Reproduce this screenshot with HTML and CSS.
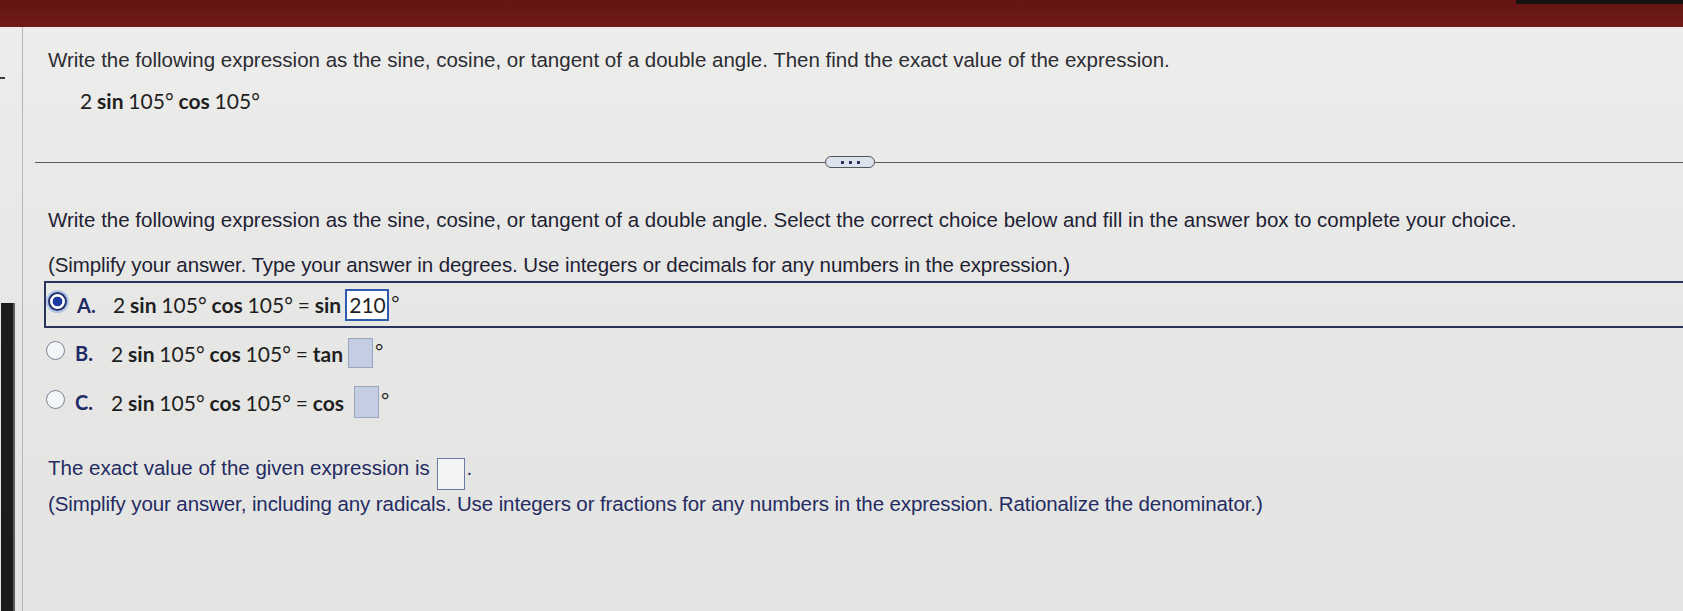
FILE: index.html
```html
<!DOCTYPE html>
<html>
<head>
<meta charset="utf-8">
<title>Double angle</title>
<link rel="stylesheet" href="styles.css">
</head>
<body>
<header class="topbar"><div class="topbar-dark"></div></header>
<div class="page">
  <aside class="gutter"><div class="tick"></div><div class="bezel"></div></aside>
  <main class="content">
    <p class="q-title">Write the following expression as the sine, cosine, or tangent of a double angle. Then find the exact value of the expression.</p>
    <p class="math q-expr">2 <b>sin</b> 105° <b>cos</b> 105°</p>
    <div class="divider"><span class="rule first"></span><span class="more"><i></i><i></i><i></i></span><span class="rule"></span></div>
    <p class="instr">Write the following expression as the sine, cosine, or tangent of a double angle. Select the correct choice below and fill in the answer box to complete your choice.</p>
    <p class="instr hint">(Simplify your answer. Type your answer in degrees. Use integers or decimals for any numbers in the expression.)</p>
    <div class="choices">
      <div class="choice selected">
        <span class="radio on"></span><span class="label">A.</span>
        <span class="math">2 <b>sin</b> 105° <b>cos</b> 105° = <b>sin</b></span>
        <span class="box filled">210</span><span class="deg">°</span>
      </div>
      <div class="choice">
        <span class="radio"></span><span class="label">B.</span>
        <span class="math">2 <b>sin</b> 105° <b>cos</b> 105° = <b>tan</b></span>
        <span class="box blank"></span><span class="deg">°</span>
      </div>
      <div class="choice last">
        <span class="radio"></span><span class="label">C.</span>
        <span class="math">2 <b>sin</b> 105° <b>cos</b> 105° = <b>cos</b></span>
        <span class="box blank tall"></span><span class="deg">°</span>
      </div>
    </div>
    <p class="answer-line">The exact value of the given expression is <span class="answer-box"></span>.</p>
    <p class="answer-hint">(Simplify your answer, including any radicals. Use integers or fractions for any numbers in the expression. Rationalize the denominator.)</p>
  </main>
</div>
</body>
</html>
```

FILE: styles.css
```css
html, body {
  margin: 0;
  height: 100%;
}
body {
  background: linear-gradient(180deg, #ededeb 0%, #e7e8e6 50%, #e3e4e2 100%);
  font-family: "Liberation Sans", Arial, sans-serif;
  overflow: hidden;
  display: flex;
  flex-direction: column;
}
.topbar {
  height: 27px;
  flex-shrink: 0;
  background: linear-gradient(180deg, #641412 0%, #701b18 100%);
  display: flex;
  justify-content: flex-end;
}
.topbar-dark {
  width: 167px;
  height: 4px;
  background: #161111;
}
.page {
  flex: 1;
  display: flex;
  min-height: 0;
}
.gutter {
  width: 22px;
  flex-shrink: 0;
  border-right: 1px solid #b7b7b5;
  display: flex;
  flex-direction: column;
}
.tick {
  margin-top: 50px;
  width: 5px;
  height: 2px;
  background: #3a3a3a;
}
.bezel {
  margin-top: 224px;
  margin-left: 1px;
  width: 12px;
  flex: 1;
  background: #1c1c1c;
  border-right: 2px solid #5c5c5c;
}
.content {
  flex: 1;
  min-width: 0;
  padding: 21px 0 0 25px;
}
p {
  margin: 0;
}
.q-title {
  font-size: 20.5px;
  line-height: 24px;
  color: #2c2c33;
}
.math {
  font-family: Lato, "Liberation Sans", sans-serif;
  font-size: 21px;
  color: #1f1f22;
  white-space: pre;
  word-spacing: -0.5px;
}
.math b {
  font-weight: 700;
}
.q-expr {
  line-height: 28px;
  margin-top: 15px;
  padding-left: 32px;
}
.divider {
  margin: 40px 0 0 -13px;
  height: 14px;
  display: flex;
  align-items: center;
}
.rule {
  flex: 1;
  border-top: 1.5px solid #58595c;
}
.rule.first {
  flex: none;
  width: 790px;
}
.more {
  width: 50px;
  height: 12px;
  box-sizing: border-box;
  border: 1.5px solid #55575c;
  border-radius: 7px;
  background: #dde3ec;
  display: flex;
  align-items: center;
  justify-content: center;
  gap: 5px;
}
.more i {
  width: 3px;
  height: 3px;
  background: #2b3566;
  display: block;
}
.instr {
  font-size: 20.5px;
  line-height: 24px;
  color: #1f2233;
  margin-top: 39px;
}
.instr.hint {
  margin-top: 21px;
  letter-spacing: -0.1px;
}
.choices {
  margin: 4px 0 0 -4px;
}
.choice {
  display: flex;
  align-items: center;
  height: 50px;
  padding-left: 2px;
  box-sizing: border-box;
}
.choice.selected {
  height: 47px;
  border: 2px solid #27345e;
  border-right: 0;
}
.choice.last {
  height: 48px;
}
.radio {
  flex: none;
  width: 19px;
  height: 19px;
  box-sizing: border-box;
  border-radius: 50%;
  border: 1.5px solid #7b8394;
  background: #f4f5f7;
  margin-bottom: 6px;
}
.radio.on {
  border: 2px solid #1f2e6c;
  box-shadow: 0 0 0 2px #b4c5ea;
  background: radial-gradient(circle, #1c3a9f 0 4.5px, #ffffff 5.2px);
}
.label {
  flex: none;
  width: 36px;
  margin-left: 10px;
  font-family: Lato, "Liberation Sans", sans-serif;
  font-weight: 700;
  font-size: 20px;
  color: #1f2b64;
}
.box {
  flex: none;
  margin-left: 4px;
  box-sizing: border-box;
}
.box.filled {
  width: 44px;
  height: 32px;
  border: 2px solid #2f5cae;
  background: #ffffff;
  font-family: Lato, "Liberation Sans", sans-serif;
  font-size: 21px;
  line-height: 28px;
  padding-left: 2px;
  color: #1f1f22;
}
.box.blank {
  width: 25px;
  height: 30px;
  border: 1px solid #98a5c5;
  background: #c4cde1;
  margin-left: 5px;
}
.box.blank.tall {
  height: 32px;
  margin-left: 10px;
}
.deg {
  font-family: Lato, "Liberation Sans", sans-serif;
  font-size: 20px;
  color: #1f1f22;
  margin-left: 2px;
  margin-bottom: 6px;
}
.answer-line {
  font-size: 20.5px;
  line-height: 24px;
  color: #242b62;
  margin-top: 30px;
}
.answer-box {
  display: inline-block;
  width: 28px;
  height: 32px;
  box-sizing: border-box;
  border: 1px solid #6a79a6;
  background: #f3f4f6;
  vertical-align: -10px;
  margin: -5px 1px -5px 2px;
}
.answer-hint {
  font-size: 20.5px;
  line-height: 24px;
  color: #242b62;
  margin-top: 7px;
  letter-spacing: -0.1px;
}
```
